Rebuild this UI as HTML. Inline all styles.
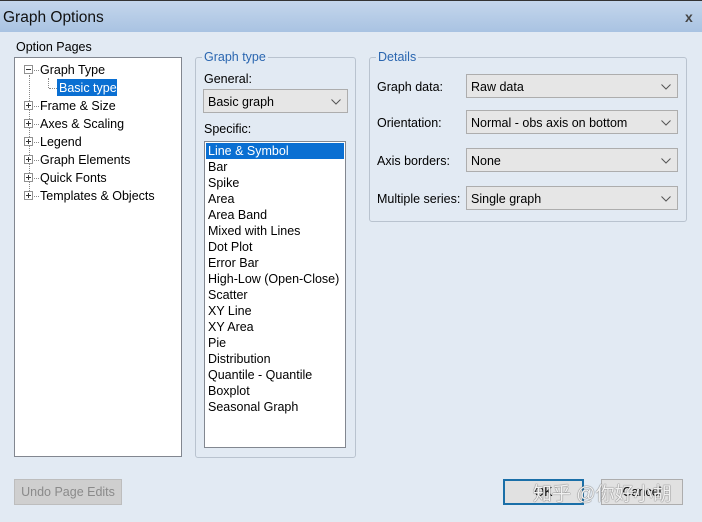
<!DOCTYPE html>
<html><head><meta charset="utf-8"><style>
*{box-sizing:border-box;margin:0;padding:0}
body{width:702px;height:522px;overflow:hidden;background:#e2eaf3;font-family:"Liberation Sans","DejaVu Sans",sans-serif;font-size:12.5px;color:#000;position:relative}
.a{position:absolute;white-space:nowrap}
.title{left:0;top:0;width:702px;height:32px;background:linear-gradient(#c4d6ec,#a9c3e2);border-top:1px solid #333}
.combo{position:absolute;background:#e6e6e6;border:1px solid #adadad;height:24px;padding:5px 0 0 4px}
.combo svg{position:absolute;right:6px;top:9px}
.grp{position:absolute;border:1px solid #b9c3cf;border-radius:3px}
.gt{position:absolute;top:-7px;left:6px;background:#e2eaf3;color:#2a66b0;padding:0 2px;line-height:13px}
.pb{position:absolute;width:9px;height:9px;border:1px solid #919191;background:#fff}
.pb:before{content:"";position:absolute;left:1px;top:3px;width:5px;height:1px;background:#333}
.pb.p:after{content:"";position:absolute;left:3px;top:1px;width:1px;height:5px;background:#333}
.dh{position:absolute;width:5px;border-top:1px dotted #888}
.li{position:absolute;left:3px;height:16px;line-height:16px}
</style></head><body>
<div class="a title"></div>
<div class="a" style="left:3px;top:9px;font-size:15.5px;color:#111">Graph Options</div>
<div class="a" style="left:685px;top:9px;font-size:14px;font-weight:bold;color:#444">x</div>

<div class="a" style="left:16px;top:40px">Option Pages</div>
<div class="a" style="left:14px;top:57px;width:168px;height:400px;background:#fff;border:1px solid #828790"></div>
<div class="a" style="left:29px;top:75px;height:122px;border-left:1px dotted #888"></div>
<div class="a" style="left:48px;top:78px;height:10px;border-left:1px dotted #888"></div>
<div class="a" style="left:49px;top:88px;width:8px;border-top:1px dotted #888"></div>
<div class="pb" style="left:24px;top:65px"></div><div class="dh" style="left:34px;top:70px"></div>
<div class="a" style="left:40px;top:63px">Graph Type</div>
<div class="a" style="left:57px;top:79px;width:60px;height:17px;background:#0a6fd2"></div>
<div class="a" style="left:59px;top:81px;color:#fff">Basic type</div>
<div class="pb p" style="left:24px;top:101px"></div><div class="dh" style="left:34px;top:106px"></div><div class="a" style="left:40px;top:99px">Frame &amp; Size</div>
<div class="pb p" style="left:24px;top:119px"></div><div class="dh" style="left:34px;top:124px"></div><div class="a" style="left:40px;top:117px">Axes &amp; Scaling</div>
<div class="pb p" style="left:24px;top:137px"></div><div class="dh" style="left:34px;top:142px"></div><div class="a" style="left:40px;top:135px">Legend</div>
<div class="pb p" style="left:24px;top:155px"></div><div class="dh" style="left:34px;top:160px"></div><div class="a" style="left:40px;top:153px">Graph Elements</div>
<div class="pb p" style="left:24px;top:173px"></div><div class="dh" style="left:34px;top:178px"></div><div class="a" style="left:40px;top:171px">Quick Fonts</div>
<div class="pb p" style="left:24px;top:191px"></div><div class="dh" style="left:34px;top:196px"></div><div class="a" style="left:40px;top:189px">Templates &amp; Objects</div>

<div class="grp" style="left:195px;top:57px;width:161px;height:401px"><span class="gt">Graph type</span></div>
<div class="a" style="left:204px;top:72px">General:</div>
<div class="combo" style="left:203px;top:89px;width:145px">Basic graph<svg width="10" height="6"><path d="M0.5 0.5L5 5L9.5 0.5" fill="none" stroke="#555"/></svg></div>
<div class="a" style="left:204px;top:122px">Specific:</div>
<div class="a" style="left:204px;top:141px;width:142px;height:307px;background:#fff;border:1px solid #828790">
<div class="a" style="left:1px;top:1px;width:138px;height:16px;background:#0a6fd2"></div>
<div class="li" style="top:1px;color:#fff">Line &amp; Symbol</div>
<div class="li" style="top:17px">Bar</div>
<div class="li" style="top:33px">Spike</div>
<div class="li" style="top:49px">Area</div>
<div class="li" style="top:65px">Area Band</div>
<div class="li" style="top:81px">Mixed with Lines</div>
<div class="li" style="top:97px">Dot Plot</div>
<div class="li" style="top:113px">Error Bar</div>
<div class="li" style="top:129px">High-Low (Open-Close)</div>
<div class="li" style="top:145px">Scatter</div>
<div class="li" style="top:161px">XY Line</div>
<div class="li" style="top:177px">XY Area</div>
<div class="li" style="top:193px">Pie</div>
<div class="li" style="top:209px">Distribution</div>
<div class="li" style="top:225px">Quantile - Quantile</div>
<div class="li" style="top:241px">Boxplot</div>
<div class="li" style="top:257px">Seasonal Graph</div>
</div>

<div class="grp" style="left:369px;top:57px;width:318px;height:165px"><span class="gt">Details</span></div>
<div class="a" style="left:377px;top:80px">Graph data:</div>
<div class="combo" style="left:466px;top:74px;width:212px">Raw data<svg width="10" height="6"><path d="M0.5 0.5L5 5L9.5 0.5" fill="none" stroke="#555"/></svg></div>
<div class="a" style="left:377px;top:116px">Orientation:</div>
<div class="combo" style="left:466px;top:110px;width:212px">Normal - obs axis on bottom<svg width="10" height="6"><path d="M0.5 0.5L5 5L9.5 0.5" fill="none" stroke="#555"/></svg></div>
<div class="a" style="left:377px;top:154px">Axis borders:</div>
<div class="combo" style="left:466px;top:148px;width:212px">None<svg width="10" height="6"><path d="M0.5 0.5L5 5L9.5 0.5" fill="none" stroke="#555"/></svg></div>
<div class="a" style="left:377px;top:192px">Multiple series:</div>
<div class="combo" style="left:466px;top:186px;width:212px">Single graph<svg width="10" height="6"><path d="M0.5 0.5L5 5L9.5 0.5" fill="none" stroke="#555"/></svg></div>

<div class="a" style="left:14px;top:479px;width:108px;height:26px;background:#cfcfcf;border:1px solid #bdbdbd;color:#8a8a8a;text-align:center;line-height:24px">Undo Page Edits</div>
<div class="a" style="left:503px;top:479px;width:81px;height:26px;background:#e1e1e1;border:2px solid #1a6fa8;text-align:center;line-height:22px">OK</div>
<div class="a" style="left:601px;top:479px;width:82px;height:26px;background:#e1e1e1;border:1px solid #adadad;text-align:center;line-height:24px">Cancel</div>
<div class="a" style="left:533px;top:479px;font-size:19px;color:rgba(255,255,255,0.9);font-family:'Liberation Sans','Noto Sans CJK SC',sans-serif;text-shadow:0 0 1px #666,0 0 1px #666">知乎 @你好小胡</div>
</body></html>
